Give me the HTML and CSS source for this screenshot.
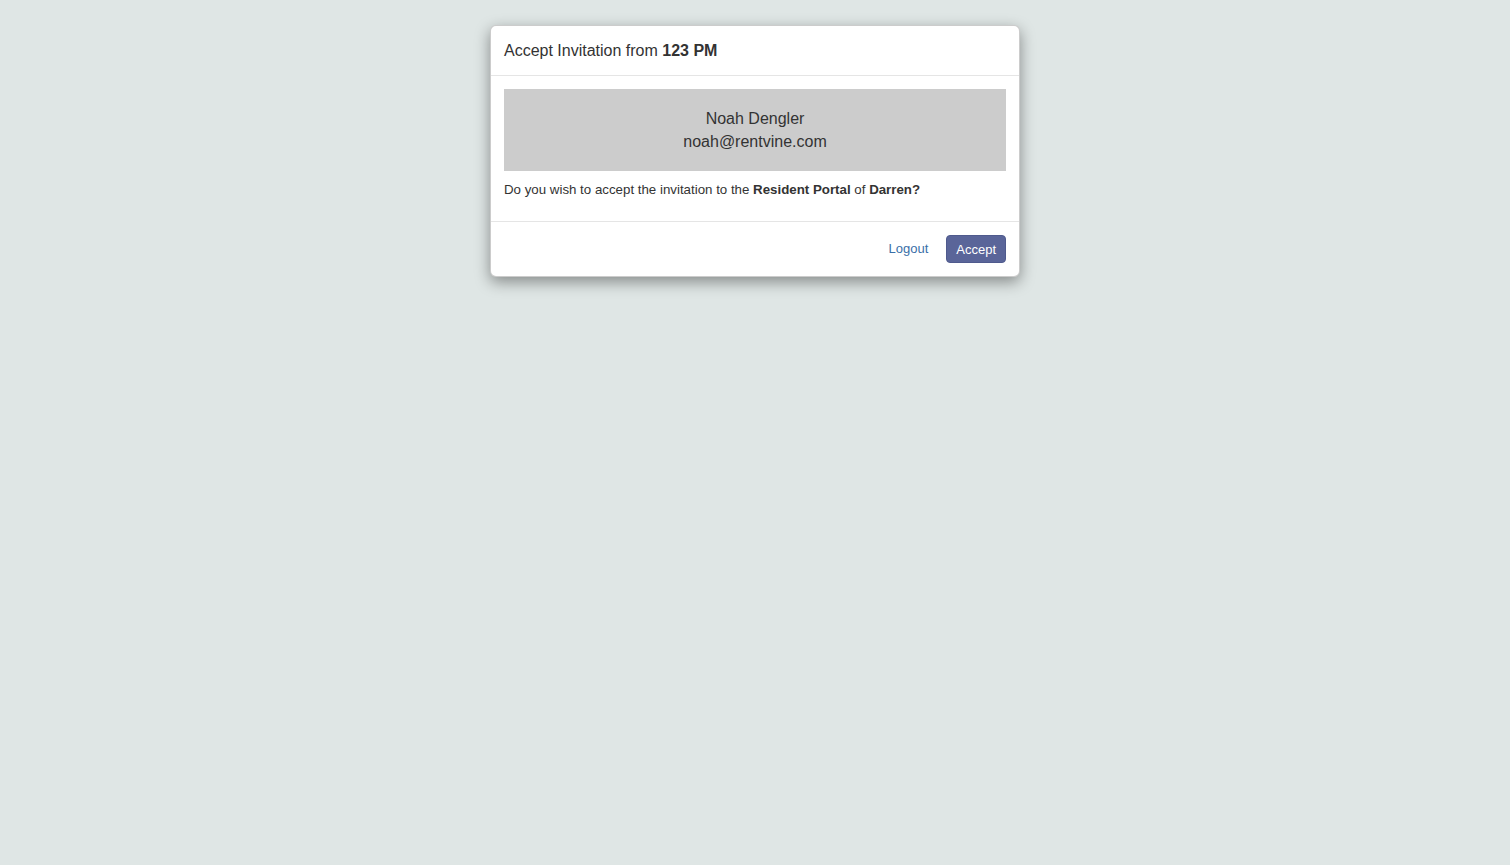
FILE: index.html
```html
<!DOCTYPE html>
<html lang="en">
<head>
    <meta charset="UTF-8">
    <meta name="viewport" content="width=device-width, initial-scale=1.0">
    <title>Accept Invitation</title>
    <link rel="stylesheet" href="styles.css">
</head>
<body>
    <div class="modal">
        <div class="modal-header">
            <h4 class="modal-title">Accept Invitation from <strong>123 PM</strong></h4>
        </div>
        <div class="modal-body">
            <div class="user-box">
                <div>Noah Dengler</div>
                <div>noah@rentvine.com</div>
            </div>
            <p>Do you wish to accept the invitation to the <strong>Resident Portal</strong> of <strong>Darren?</strong></p>
        </div>
        <div class="modal-footer">
            <a href="#" class="btn-link">Logout</a>
            <button class="btn-primary">Accept</button>
        </div>
    </div>
</body>
</html>
```

FILE: styles.css
```css
body {
    font-family: 'Liberation Sans', Arial, sans-serif;
    font-size: 13px;
    color: #333;
    margin: 0;
    background: #dfe6e5;
    min-height: 100vh;
}
.modal {
    width: 528px;
    margin: 25px auto 0;
    background: #fff;
    border: 1px solid rgba(0, 0, 0, 0.2);
    border-radius: 6px;
    box-shadow: 0 5px 15px rgba(0, 0, 0, 0.4);
}
.modal-header {
    padding: 13px;
    border-bottom: 1px solid #e5e5e5;
}
.modal-title {
    margin: 0;
    font-size: 16px;
    font-weight: normal;
    line-height: 23px;
}
.modal-body {
    padding: 13px;
}
.user-box {
    background: #cccccc;
    text-align: center;
    font-size: 16px;
    line-height: 23px;
    padding: 18px 0;
}
.modal-body p {
    margin: 10px 0 9px;
    line-height: 18px;
    font-size: 13.3px;
}
.modal-footer {
    padding: 13px;
    border-top: 1px solid #e5e5e5;
    display: flex;
    justify-content: flex-end;
    align-items: center;
    gap: 6px;
}
.btn-link {
    color: #3a6fa8;
    text-decoration: none;
    padding: 0 12px;
    line-height: 28px;
}
.btn-primary {
    font-family: inherit;
    font-size: 13px;
    color: #fff;
    background: #5a6599;
    border: 1px solid #4f5a8d;
    border-radius: 4px;
    height: 28px;
    padding: 0 9px;
    cursor: pointer;
}
```
